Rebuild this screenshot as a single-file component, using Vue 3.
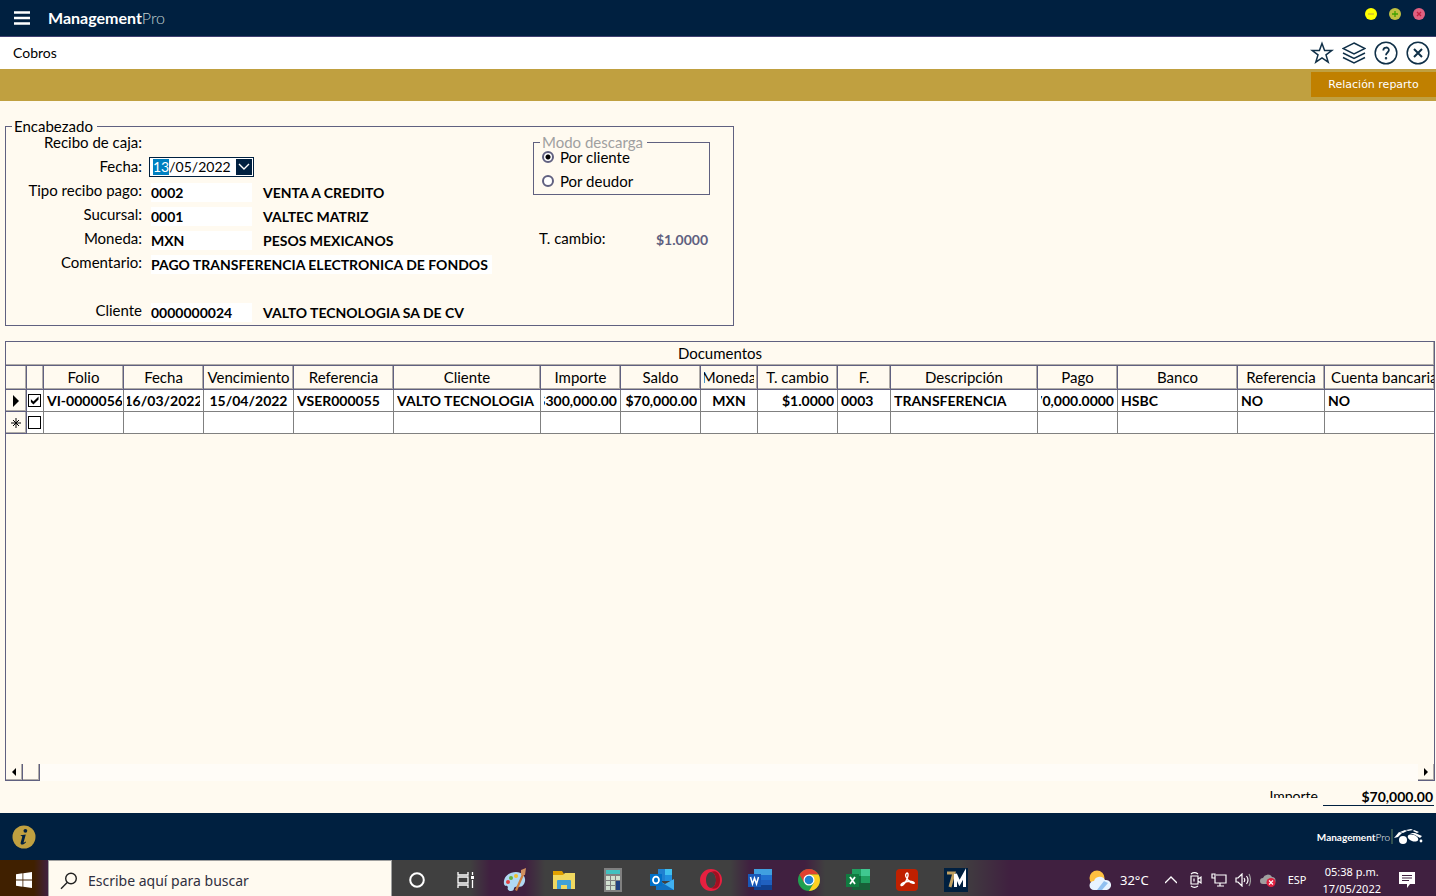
<script setup>
import { onMounted, ref } from 'vue'

const fecha = ref('13/05/2022')
const fechaInput = ref(null)
const modo = ref('cliente')

const columns = [
  { title: 'Folio', width: 80, align: 'left', value: 'VI-0000056' },
  { title: 'Fecha', width: 80, align: 'center', value: '16/03/2022' },
  { title: 'Vencimiento', width: 90, align: 'center', value: '15/04/2022' },
  { title: 'Referencia', width: 100, align: 'left', value: 'VSER000055' },
  { title: 'Cliente', width: 147, align: 'left', value: 'VALTO TECNOLOGIA' },
  { title: 'Importe', width: 80, align: 'right', value: '$300,000.00' },
  { title: 'Saldo', width: 80, align: 'right', value: '$70,000.00' },
  { title: 'Moneda', width: 57, align: 'center', value: 'MXN' },
  { title: 'T. cambio', width: 80, align: 'right', value: '$1.0000' },
  { title: 'F.', width: 53, align: 'left', value: '0003' },
  { title: 'Descripción', width: 147, align: 'left', value: 'TRANSFERENCIA' },
  { title: 'Pago', width: 80, align: 'right', value: '$70,000.0000' },
  { title: 'Banco', width: 120, align: 'left', value: 'HSBC' },
  { title: 'Referencia', width: 87, align: 'left', value: 'NO' },
  { title: 'Cuenta bancaria', width: null, align: 'left', value: 'NO' },
]

onMounted(() => {
  fechaInput.value.focus()
  fechaInput.value.setSelectionRange(0, 2)
})
</script>

<template>
  <div class="screen">
    <header class="titlebar">
      <button class="icon-btn menu" aria-label="Menú">
        <svg width="16" height="14" viewBox="0 0 16 14"><path d="M0 1.5h16M0 7h16M0 12.5h16" stroke="#fff" stroke-width="2.6" /></svg>
      </button>
      <div class="brand"><b>Management</b><span>Pro</span></div>
      <div class="window-btns">
        <button class="dot yellow" aria-label="Minimizar"><svg viewBox="0 0 12 12"><path d="M3 6h6" stroke="#c0a040" /></svg></button>
        <button class="dot green" aria-label="Maximizar"><svg viewBox="0 0 12 12"><path d="M3 6h6M6 3v6" stroke="#40a000" stroke-width="1.3" /></svg></button>
        <button class="dot red" aria-label="Cerrar"><svg viewBox="0 0 12 12"><path d="M4 4l4 4M8 4l-4 4" stroke="#c02040" stroke-width="1.3" /></svg></button>
      </div>
    </header>

    <div class="pagebar">
      <h1>Cobros</h1>
      <div class="page-actions">
        <button class="icon-btn" aria-label="Favorito">
          <svg width="24" height="24" viewBox="0 0 24 24" class="line"><path d="M12 2.500l2.600 7h7.200l-5.800 4.400 2.200 7.300-6.200-4.400-6.200 4.400L8 13.900 2.200 9.500h7.200z" /></svg>
        </button>
        <button class="icon-btn" aria-label="Capas">
          <svg width="24" height="24" viewBox="0 0 24 24" class="line"><path d="M12 2l11 5.500-11 5.500L1 7.500zM1 12l11 5.500L23 12M1 16.500L12 22l11-5.500" /></svg>
        </button>
        <button class="icon-btn" aria-label="Ayuda">
          <svg width="24" height="24" viewBox="0 0 24 24" class="line"><circle cx="12" cy="12" r="10.800" /><path d="M9.300 9.500c0-4 5.600-3.800 5.600-.4 0 2.400-2.900 2.400-2.900 5.200" stroke-width="1.800" /><circle cx="12" cy="17.200" r=".5" /></svg>
        </button>
        <button class="icon-btn" aria-label="Cerrar página">
          <svg width="24" height="24" viewBox="0 0 24 24" class="line"><circle cx="12" cy="12" r="10.800" /><path d="M8 8l8 8M16 8l-8 8" stroke-width="2" /></svg>
        </button>
      </div>
    </div>

    <div class="ribbon"><button class="ribbon-btn">Relación reparto</button></div>

    <main class="content">
      <fieldset class="group">
        <legend>Encabezado</legend>
        <div class="form">
          <span class="lbl">Recibo de caja:</span>

          <label class="lbl r2" for="fecha">Fecha:</label>
          <div class="date r2">
            <input id="fecha" ref="fechaInput" v-model="fecha" type="text" />
            <button aria-label="Abrir calendario">
              <svg width="12" height="8" viewBox="0 0 12 8"><path d="M1 1l5 5 5-5" fill="none" stroke="#fff" stroke-width="1.400" /></svg>
            </button>
          </div>

          <label class="lbl r3" for="tipo">Tipo recibo pago:</label>
          <input id="tipo" class="field r3" value="0002" />
          <output class="desc r3" for="tipo">VENTA A CREDITO</output>

          <label class="lbl r4" for="sucursal">Sucursal:</label>
          <input id="sucursal" class="field r4" value="0001" />
          <output class="desc r4" for="sucursal">VALTEC MATRIZ</output>

          <label class="lbl r5" for="moneda">Moneda:</label>
          <input id="moneda" class="field r5" value="MXN" />
          <output class="desc r5" for="moneda">PESOS MEXICANOS</output>

          <label class="lbl r6" for="comentario">Comentario:</label>
          <input id="comentario" class="field wide r6" value="PAGO TRANSFERENCIA ELECTRONICA DE FONDOS" />

          <label class="lbl r8" for="cliente">Cliente</label>
          <input id="cliente" class="field r8" value="0000000024" />
          <output class="desc r8" for="cliente">VALTO TECNOLOGIA SA DE CV</output>

          <fieldset class="group mode">
            <legend>Modo descarga</legend>
            <label><input v-model="modo" type="radio" name="modo" value="cliente" />Por cliente</label>
            <label><input v-model="modo" type="radio" name="modo" value="deudor" />Por deudor</label>
          </fieldset>

          <div class="rate r5">
            <label for="cambio">T. cambio:</label>
            <output id="cambio">$1.0000</output>
          </div>
        </div>
      </fieldset>

      <section class="grid-panel">
        <div class="grid-body">
          <table>
            <colgroup>
              <col class="c-mark" />
              <col class="c-check" />
              <col v-for="(c, i) in columns" :key="i" :style="c.width ? { width: c.width + 'px' } : null" />
            </colgroup>
            <thead>
              <tr>
                <th colspan="17"><div class="cell center">Documentos</div></th>
              </tr>
              <tr>
                <th></th>
                <th></th>
                <th v-for="(c, i) in columns" :key="i"><div class="cell" :class="c.width ? 'center' : 'open'">{{ c.title }}</div></th>
              </tr>
            </thead>
            <tbody>
              <tr>
                <td class="mark"><svg width="8" height="12" viewBox="0 0 8 12"><path d="M1 0l6 6-6 6z" /></svg></td>
                <td class="pick"><input type="checkbox" checked aria-label="Seleccionar VI-0000056" /></td>
                <td v-for="(c, i) in columns" :key="i"><div class="cell" :class="c.align">{{ c.value }}</div></td>
              </tr>
              <tr>
                <td class="mark"><svg width="10" height="10" viewBox="0 0 10 10"><path d="M5 0v10M0 5h10M2 2l6 6M8 2L2 8" stroke="#000" /></svg></td>
                <td class="pick"><input type="checkbox" aria-label="Seleccionar fila nueva" /></td>
                <td v-for="(c, i) in columns" :key="i"></td>
              </tr>
            </tbody>
          </table>
        </div>
        <div class="scroll">
          <button aria-label="Desplazar a la izquierda"><svg width="4" height="8" viewBox="0 0 4 8"><path d="M4 0v8L0 4z" /></svg></button>
          <button class="thumb" aria-label="Barra"></button>
          <button class="last" aria-label="Desplazar a la derecha"><svg width="4" height="8" viewBox="0 0 4 8"><path d="M0 0v8l4-4z" /></svg></button>
        </div>
      </section>

      <div class="total">
        <label for="total">Importe</label>
        <output id="total">$70,000.00</output>
      </div>
    </main>

    <footer class="statusbar">
      <button class="icon-btn" aria-label="Información">
        <svg width="24" height="24" viewBox="0 0 24 24"><circle cx="12" cy="12" r="11.500" fill="#c0a040" /><circle cx="13.400" cy="5.800" r="1.900" fill="#002040" /><path d="M8.800 10.200l5-.7-2.100 7.600c-.2.900.5.700 1.800-.5l.5.600c-2.600 3.100-6 2.900-5.300.2l1.500-5.300c.2-.9-.3-1.100-1.500-1.100z" fill="#002040" /></svg>
      </button>
      <div class="brand small">
        <b>Management</b><span>Pro</span>
        <svg width="34" height="18" viewBox="0 0 34 18" fill="#fff">
          <path d="M2 1v15" stroke="#608060" />
          <path d="M4 10l5-6 3 1-4 4zM10 4l5-2 2 1-4 2zM16 2l5-1 2 1-5 1zM24 2l5 2-2 1-4-2zM20 5l5 0 7 3-2 2-5-3z" />
          <circle cx="13" cy="12" r="4" /><ellipse cx="23" cy="10" rx="5.500" ry="3.200" transform="rotate(20 23 10)" />
          <circle cx="31" cy="13" r="1.400" />
        </svg>
      </div>
    </footer>

    <nav class="taskbar" aria-label="Barra de tareas">
      <button class="start-btn" aria-label="Inicio">
        <svg width="16" height="16" viewBox="0 0 16 16" fill="#fff"><path d="M0 2.200l6.500-.9v6.300H0zM7.300 1.200L16 0v7.600H7.300zM0 8.400h6.500v6.300l-6.500-.9zM7.300 8.400H16V16l-8.700-1.200z" /></svg>
      </button>
      <div class="search">
        <svg width="18" height="18" viewBox="0 0 18 18" fill="none" stroke="#202020" stroke-width="1.400"><circle cx="11" cy="6.500" r="5.300" /><path d="M7.200 10.500L1 16.800" /></svg>
        <input type="text" placeholder="Escribe aquí para buscar" aria-label="Buscar" />
      </div>
      <div class="apps">
        <button aria-label="Cortana"><svg viewBox="0 0 26 26"><circle cx="13" cy="13" r="6.800" fill="none" stroke="#fff" stroke-width="2" /></svg></button>
        <button aria-label="Vista de tareas"><svg viewBox="0 0 26 26" fill="none" stroke="#fff" stroke-width="1.300"><path d="M5 5v3h10V5M5 21v-3h10v3M5 10h10v6H5zM19.500 5v3M19.500 13v8" /><path d="M18 9h3v3h-3z" fill="#fff" stroke="none" /></svg></button>
        <button aria-label="Paint"><svg viewBox="0 0 26 26"><path d="M2 17c-1-6 4-12 12-12 8 0 11 7 8 12-3 5-6 1-9 3-2 1 0 4-4 4-3 0-4-2-3-4-1-2-3 0-4-3z" fill="#b0d8f4" /><circle cx="6" cy="15" r="2" fill="#e04040" /><circle cx="9" cy="11" r="2" fill="#60b040" /><circle cx="14" cy="9" r="2" fill="#f0c030" /><path d="M20 7l2 1-7 16-2-1z" fill="#d08040" /><path d="M19 8l0-5 5-2-1 7z" fill="#d09060" /></svg></button>
        <button aria-label="Explorador"><svg viewBox="0 0 26 26"><path d="M2 4h9l2 3h11v14H2z" fill="#e0a000" /><path d="M2 8h10l2-2h10v16H2z" fill="#f0d860" /><path d="M6 14q0-1 1-1h12q1 0 1 1v8h-4v-4h-6v4H6z" fill="#40a0d8" /></svg></button>
        <button aria-label="Calculadora"><svg viewBox="0 0 26 26"><path d="M4 1h18v24H4z" fill="#808080" /><path d="M6 3h14v4H6z" fill="#40c0c0" /><path d="M6 9h4v4H6zM11 9h4v4h-4zM16 9h4v4h-4zM6 14h4v4H6zM11 14h4v4h-4zM6 19h4v4H6zM11 19h4v4h-4z" fill="#d0e0d0" /><path d="M16 14h4v9h-4z" fill="#204080" /></svg></button>
        <button aria-label="Outlook"><svg viewBox="0 0 26 26"><path d="M9 2h14v12H9z" fill="#2080d0" /><path d="M16 2h7v6h-7z" fill="#40c0f0" /><path d="M16 8h7v6h-7z" fill="#2090e0" /><path d="M7 12l9 5 9-5v11H7z" fill="#40b0f0" /><path d="M7 12l18 11H7z" fill="#1070c0" /><path d="M1 7h12v12H1z" fill="#0070c8" /><ellipse cx="7" cy="13" rx="3" ry="3.400" fill="none" stroke="#fff" stroke-width="1.800" /></svg></button>
        <button aria-label="Opera"><svg viewBox="0 0 26 26"><path fill-rule="evenodd" d="M13 2a11 11 0 100 22 11 11 0 000-22zm0 3c3 0 5 4 5 8s-2 8-5 8-5-4-5-8 2-8 5-8z" fill="#e82040" /><path d="M13 5c4-2 9 0 9 8s-5 10-9 8c3 0 5-4 5-8s-2-8-5-8z" fill="#a01020" /></svg></button>
        <button aria-label="Word"><svg viewBox="0 0 26 26"><path d="M7 2h18v6H7z" fill="#40a0e0" /><path d="M7 8h18v5H7z" fill="#2070d0" /><path d="M7 13h18v5H7z" fill="#2060c0" /><path d="M7 18h18v5H7z" fill="#104090" /><path d="M1 7h13v13H1z" fill="#1858b8" /><path d="M3.500 10l2 7 2-6 2 6 2-7" fill="none" stroke="#fff" stroke-width="1.500" /></svg></button>
        <button aria-label="Chrome"><svg viewBox="0 0 26 26"><circle cx="13" cy="13" r="11" fill="#20a050" /><path d="M3.500 7.500A11 11 0 0122.500 7.500H13l-5 8z" fill="#e04030" /><path d="M22.500 7.500A11 11 0 0113 24l5-8.500-5-8z" fill="#ffd020" /><circle cx="13" cy="13" r="5.500" fill="#fff" /><circle cx="13" cy="13" r="4.300" fill="#2080d0" /></svg></button>
        <button aria-label="Excel"><svg viewBox="0 0 26 26"><path d="M7 2h9v7H7z" fill="#20a060" /><path d="M16 2h9v7h-9z" fill="#40c890" /><path d="M7 9h9v7H7z" fill="#107040" /><path d="M16 9h9v7h-9z" fill="#20a060" /><path d="M7 16h18v7H7z" fill="#186038" /><path d="M1 7h13v13H1z" fill="#107c40" /><path d="M5 10l5 7M10 10l-5 7" stroke="#fff" stroke-width="1.800" /></svg></button>
        <button aria-label="Acrobat"><svg viewBox="0 0 26 26"><rect x="2" y="2" width="22" height="22" rx="4" fill="#c02000" /><path d="M12 7c2-3 3 1 1 5-2 5-6 8-6 6s8-5 12-3-2 2-5-2-3-5-2-6z" fill="none" stroke="#fff" stroke-width="1.400" /></svg></button>
        <button aria-label="ManagementPro"><svg viewBox="0 0 26 26"><path d="M1 1h24v24H1z" fill="#002040" /><path d="M4 6h7L7 20" fill="none" stroke="#c0a060" stroke-width="3" /><path d="M12.500 20V7l4 9 5-9v13" fill="none" stroke="#fff" stroke-width="3" /></svg></button>
      </div>
      <div class="tray">
        <svg width="24" height="22" viewBox="0 0 24 22"><circle cx="9" cy="9" r="7.500" fill="#ffc040" /><path d="M6 21a4.500 4.500 0 010-9 6 6 0 0111-1 5 5 0 012 10z" fill="#e8f4ff" /><path d="M9 21l7-9 4 2-6 7z" fill="#90c0f0" /></svg>
        <span class="temp">32°C</span>
        <svg class="chev" width="12" height="8" viewBox="0 0 12 8" fill="none" stroke="#fff" stroke-width="1.300"><path d="M0 7l6-6 6 6" /></svg>
        <svg width="14" height="16" viewBox="0 0 14 16" fill="none" stroke="#fff" stroke-width="1.200"><path d="M2 4h7v8H2zM9 7l3-2v6l-3-2M2 2c2-1.500 5-1.500 7 0M2 14c2 1.500 5 1.500 7 0M5 6.500v3" /></svg>
        <svg width="16" height="14" viewBox="0 0 16 14" fill="none" stroke="#fff" stroke-width="1.200"><path d="M5 2h10v8H4V5M1 1h3v4H1zM9 10v3M6 13h7" /></svg>
        <svg width="16" height="14" viewBox="0 0 16 14" fill="none" stroke="#fff" stroke-width="1.200"><path d="M1 5h2l4-4v12L3 9H1zM9 5q1.500 2 0 4M11.500 3q3 4 0 8" /><path d="M14 1q3 6 0 12" stroke="#a0a0a0" /></svg>
        <svg width="17" height="14" viewBox="0 0 17 14"><path d="M4 11a3 3 0 010-6 5 5 0 019-1 3 3 0 010 7z" fill="#a0a0a0" /><circle cx="12" cy="9.500" r="4.500" fill="#e02040" /><path d="M10 7.500l4 4M14 7.500l-4 4" stroke="#fff" stroke-width="1.200" /></svg>
        <span class="lang">ESP</span>
        <div class="clock"><span>05:38 p.m.</span><span>17/05/2022</span></div>
        <svg width="16" height="16" viewBox="0 0 16 16"><path d="M0 0h16v12h-5l-3 4v-4H0z" fill="#fff" /><path d="M3 3.500h10M3 6h10M3 8.500h7" stroke="#402040" /></svg>
      </div>
    </nav>
  </div>
</template>

<style>
body {
  background: #fffaf0;
}
</style>

<style scoped>
.screen {
  --navy: #002040;
  --cream: #fffaf0;
  --line: #606080;
  display: flex;
  flex-direction: column;
  min-height: 100vh;
  background: var(--cream);
  color: #000;
  font: 14px/16px Lato, "Liberation Sans", sans-serif;
  overflow: hidden;
}
.screen * {
  box-sizing: border-box;
}
button,
input {
  font: inherit;
  color: inherit;
  border: 0;
  padding: 0;
  margin: 0;
  background: none;
  outline: none;
}
svg {
  display: block;
}
.titlebar {
  display: flex;
  align-items: center;
  height: 37px;
  padding: 0 11px 0 14px;
  background: var(--navy);
  border-bottom: 1px solid #404070;
}
.brand {
  display: flex;
  align-items: center;
  margin-left: 18px;
  color: #fff;
  font-size: 16px;
  line-height: 20px;
}
.brand span {
  font-weight: 300;
  color: #c0d0d0;
}
.window-btns {
  display: flex;
  gap: 12px;
  margin: 0 0 8px auto;
}
.dot {
  width: 12px;
  height: 12px;
  border-radius: 50%;
}
.yellow { background: #ffff00; }
.green { background: #c0c040; }
.red { background: #e06080; }
.pagebar {
  display: flex;
  align-items: center;
  justify-content: space-between;
  height: 32px;
  padding: 0 6px 0 13px;
  background: #fff;
}
h1 {
  margin: 0;
  font-size: 14px;
  font-weight: 400;
}
.page-actions {
  display: flex;
  gap: 8px;
}
.line {
  fill: none;
  stroke: #103048;
  stroke-width: 1.5;
}
.ribbon {
  display: flex;
  justify-content: flex-end;
  align-items: center;
  height: 32px;
  padding-bottom: 1px;
  background: #c0a040;
}
.ribbon-btn {
  width: 125px;
  height: 25px;
  background: #c08000;
  color: #fff;
  font: 11px/16px "DejaVu Sans", sans-serif;
}
.content {
  display: flex;
  flex-direction: column;
  flex: 1;
  padding: 21px 1px 0 5px;
}
.group {
  margin: 0;
  padding: 0;
  border: 1px solid var(--line);
  min-width: 0;
}
.group legend {
  margin-left: 6px;
  padding: 0 4px 0 2px;
  font-size: 15px;
  line-height: 9px;
}
.content > .group {
  align-self: flex-start;
}
.form {
  display: grid;
  grid-template-columns: 136px 103px 261px 177px;
  grid-template-rows: repeat(8, 24px);
  column-gap: 9px;
  padding: 0 23px 2px 0;
}
.r2 { grid-row: 2; }
.r3 { grid-row: 3; }
.r4 { grid-row: 4; }
.r5 { grid-row: 5; }
.r6 { grid-row: 6; }
.r8 { grid-row: 8; }
.lbl {
  grid-column: 1;
  align-self: center;
  justify-self: end;
  padding-bottom: 2px;
  font-size: 15px;
}
.field {
  grid-column: 2;
  align-self: end;
  width: 101px;
  height: 19px;
  margin-bottom: 1px;
  background: #fff;
  font-weight: 700;
}
.field.wide {
  grid-column: 2 / 4;
  width: 341px;
}
.desc {
  grid-column: 3;
  align-self: end;
  margin-bottom: 1px;
  line-height: 19px;
  font-weight: 700;
}
.date {
  grid-column: 2;
  align-self: center;
  display: flex;
  align-items: stretch;
  width: 105px;
  height: 20px;
  margin-left: -2px;
  padding: 1px;
  background: #fff;
  border: 1px solid var(--navy);
}
.date input {
  flex: 1;
  min-width: 0;
  padding-left: 2px;
}
.date input::selection {
  background: #0080c0;
  color: #fff;
}
.date button {
  display: grid;
  place-items: center;
  width: 16px;
  background: var(--navy);
}
.mode {
  grid-column: 4;
  grid-row: 1 / 4;
  align-self: start;
  height: 56px;
  margin-top: 8px;
}
.mode legend {
  color: #a0a0a0;
  line-height: 7px;
}
.mode label {
  display: flex;
  align-items: center;
  gap: 6px;
  height: 24px;
  padding: 0 0 2px 8px;
  font-size: 15px;
}
.mode input {
  appearance: none;
  width: 12px;
  height: 12px;
  border: 2px solid var(--line);
  border-radius: 50%;
  background: #fff;
}
.mode input:checked {
  background: radial-gradient(circle, #000 2px, #fff 3px);
}
.rate {
  grid-column: 4;
  display: flex;
  align-items: center;
  justify-content: space-between;
  padding: 0 2px 0 6px;
}
.rate label {
  padding-bottom: 2px;
  font-size: 15px;
}
.rate output {
  padding-top: 2px;
  color: var(--line);
  font-weight: 700;
}
.grid-panel {
  display: flex;
  flex-direction: column;
  flex: 1;
  margin-top: 15px;
}
.grid-body {
  flex: 1;
  border: 1px solid var(--line);
  border-bottom: 0;
}
table {
  width: 100%;
  table-layout: fixed;
  border-collapse: separate;
  border-spacing: 0;
}
.c-mark { width: 21px; }
.c-check { width: 17px; }
th,
td {
  padding: 0;
  border-right: 1px solid #808080;
  border-bottom: 1px solid #808080;
}
th {
  height: 24px;
  font-size: 15px;
  font-weight: 400;
  border-color: var(--line);
  box-shadow: inset -1px -1px #b0aca8;
}
td {
  height: 22px;
  background: #fff;
  font-weight: 700;
}
th:last-child,
td:last-child {
  border-right: 0;
}
.cell {
  display: flex;
  margin: 0 3px;
  overflow: hidden;
  white-space: nowrap;
}
th .cell {
  padding-bottom: 2px;
}
.cell.left {
  margin-right: 1px;
}
.cell.open {
  margin: 0 0 0 6px;
}
.center { justify-content: center; }
.right { justify-content: flex-end; }
.mark {
  background: var(--cream);
  border-color: var(--line);
  box-shadow: inset -1px -1px #b0aca8;
}
.mark svg {
  margin: 0 auto;
}
.pick input {
  appearance: none;
  display: block;
  width: 13px;
  height: 13px;
  margin: 0 1px;
  border: 1px solid #000;
  background: #fff;
}
.pick input:checked::after {
  content: "";
  display: block;
  width: 9px;
  height: 9px;
  margin: 1px;
  background: #000;
  clip-path: polygon(10% 35%, 38% 60%, 95% 5%, 95% 38%, 38% 95%, 10% 68%);
}
.scroll {
  display: flex;
  height: 17px;
  border-left: 1px solid var(--line);
  background: #fffcf7;
}
.scroll button {
  display: grid;
  place-items: center;
  width: 17px;
  background: var(--cream);
  border-right: 1px solid var(--line);
  border-bottom: 1px solid var(--line);
  box-shadow: inset -1px -1px #b0aca8;
}
.scroll .last {
  margin-left: auto;
}
.total {
  display: flex;
  align-items: flex-start;
  justify-content: flex-end;
  gap: 5px;
  height: 32px;
  padding: 7px 1px 0 0;
}
.total label {
  height: 10px;
  overflow: hidden;
}
.total output {
  width: 111px;
  padding-right: 1px;
  border-bottom: 1px solid var(--navy);
  font-weight: 700;
  line-height: 17px;
  text-align: right;
}
.statusbar {
  display: flex;
  align-items: center;
  justify-content: space-between;
  height: 47px;
  padding: 1px 12px 0;
  background: var(--navy);
}
.brand.small {
  font-size: 10px;
  line-height: 16px;
}
.brand.small span {
  color: #fff;
}
.taskbar {
  display: flex;
  height: 36px;
  background: linear-gradient(90deg, #402000 0 34px, #402040 48px, #404040 60px 470px, #402040 490px 525px, #404040 545px 730px, #402040 750px 805px, #404040 825px 960px, #402040 1010px);
  color: #fff;
  font-family: "Noto Sans", "Open Sans", sans-serif;
}
.start-btn {
  display: grid;
  place-items: center;
  width: 48px;
  padding-top: 4px;
}
.search {
  display: flex;
  align-items: center;
  gap: 10px;
  width: 344px;
  padding: 4px 0 0 11px;
  border: 1px solid #a0a0a0;
  border-bottom: 0;
  background: var(--cream);
}
.search input {
  flex: 1;
  color: #303040;
}
.search input::placeholder {
  color: #303040;
  opacity: 1;
}
.apps {
  display: flex;
  padding-top: 4px;
}
.apps button {
  display: grid;
  place-items: center;
  width: 49px;
}
.apps svg {
  width: 26px;
  height: 26px;
}
.tray {
  display: flex;
  align-items: center;
  gap: 8px;
  margin-left: auto;
  padding: 4px 21px 0 0;
}
.temp {
  font-size: 13px;
}
.chev {
  margin: 0 4px 0 8px;
}
.lang {
  margin: 0 8px 0 4px;
  font-size: 11px;
}
.clock {
  display: flex;
  flex-direction: column;
  align-items: center;
  margin-right: 10px;
  font-size: 11px;
  line-height: 17px;
}
</style>
